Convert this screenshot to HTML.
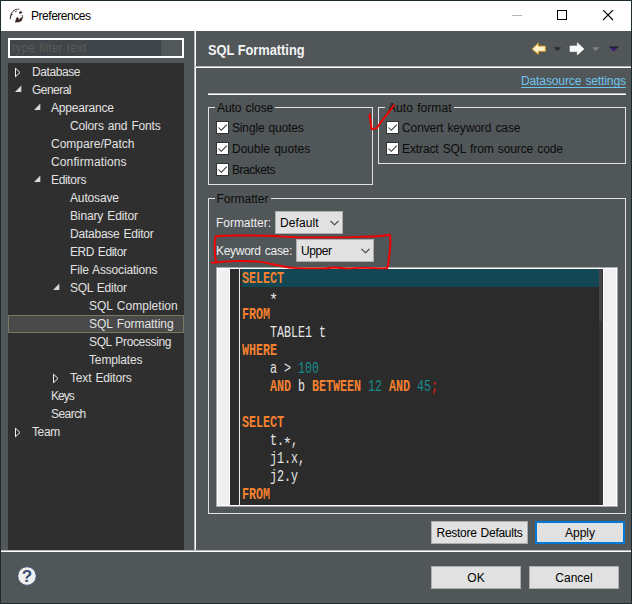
<!DOCTYPE html>
<html><head><meta charset="utf-8"><title>Preferences</title>
<style>
html,body{margin:0;padding:0;}
body{width:632px;height:604px;overflow:hidden;background:#515658;font-family:"Liberation Sans",sans-serif;font-size:12px;color:#eee;position:relative;word-spacing:0.9px;}
div,svg,span{position:absolute;box-sizing:border-box;}
.win{left:0;top:0;width:632px;height:604px;border:1px solid #1d2b30;}
.tb{left:1px;top:1px;width:630px;height:30px;background:#fff;}
.title{left:31px;top:9px;line-height:15px;color:#000;white-space:nowrap;}
.filter{left:8px;top:38px;width:176px;height:20px;border:2px solid #fff;background:#3f4548;}
.filter span{left:2px;top:1px;line-height:15px;color:#5b5957;white-space:nowrap;}
.fclr{right:0;top:0;width:21px;height:16px;background:#52575a;}
.tree{left:8px;top:63px;width:176px;height:487px;background:#2f2f2f;}
.ti{height:18px;line-height:18px;white-space:nowrap;color:#e2e2e2;}
.selrow{left:8px;width:176px;height:18px;background:#494949;border:1px solid #7b7962;}
.vl{left:194px;top:31px;width:2px;height:520px;background:#fff;border-left:1px solid #b4b6b7;}
.hl1{left:195px;top:66px;width:436px;height:2px;background:#fff;border-top:1px solid #b4b6b7;}
.hl2{left:208px;top:93px;width:418px;height:2px;background:#fff;border-top:1px solid #b4b6b7;}
.hl3{left:1px;top:550px;width:630px;height:2px;background:#fff;border-top:1px solid #b4b6b7;}
.rs{left:627px;top:68px;width:4px;height:482px;background:#4c5153;}
.h1{left:208px;top:42px;font-weight:bold;font-size:14px;line-height:16px;transform-origin:0 0;transform:scaleX(0.915);word-spacing:0;color:#f4f4f4;white-space:nowrap;}
.link{left:521px;top:74px;line-height:15px;color:#6fc5ee;text-decoration:underline;text-underline-offset:2px;white-space:nowrap;}
.fs{border:1px solid #e2e2e2;}
.lg{background:#515658;color:#0c0c0c;line-height:14px;white-space:nowrap;padding:0 1px;}
.cb{width:13px;height:13px;background:#fff;border:1px solid #333;}
.cbl{color:#0c0c0c;line-height:15px;white-space:nowrap;}
.lbl{color:#eee;line-height:15px;white-space:nowrap;}
.combo{background:#e1e1e1;border:1px solid #adadad;color:#000;}
.combo span{left:4px;top:3px;line-height:15px;}
.btn{background:#e1e1e1;border:1px solid #adadad;color:#000;text-align:center;line-height:23px;height:23px;white-space:nowrap;}
.ed{left:216px;top:267px;width:402px;height:240px;background:#fff;border:1px solid #a4a8ab;overflow:hidden;}
.eds{top:1px;height:236px;background:#f0f0f0;}
.edin{left:13px;top:1px;width:373px;height:236px;background:#2b2b2b;overflow:hidden;}
.gl{left:9px;top:0;width:1px;height:236px;background:#ededed;}
.cur{left:12px;top:0;width:357px;height:18px;background:#134753;}
.sb{left:369px;top:0;width:4px;height:236px;background:#353535;}
.sbt{left:369px;top:0;width:3px;height:52px;background:#444;}
.code{word-spacing:0;left:12px;top:1px;transform-origin:0 0;transform:scaleX(0.6863);font-family:"Liberation Mono",monospace;font-size:17px;color:#e6e6e6;white-space:pre;}
.cl{position:static;height:18px;line-height:18px;}
.cl b{color:#f5812f;font-weight:bold;}
.cl i{color:#168a8c;font-style:normal;}
.cl s{position:relative;display:inline-block;line-height:1;top:3.6px;transform:scaleX(1.3);text-decoration:none;}
.cl u{color:#e81c1c;text-decoration:none;}
</style></head><body>
<div class="tb"></div>
<svg style="left:0;top:0" width="32" height="32" viewBox="0 0 32 32"><g fill="none" stroke="#3a2927" stroke-linecap="round"><path d="M10.2 18.6 C10.5 16.8 10.9 15.2 11.4 13.6" stroke-width="1.1"/><path d="M11.6 13 C12.3 11.7 13.4 10.6 14.8 9.9" stroke-width="1"/><path d="M15.4 9.6 C16.6 9.2 17.8 9.1 19 9.2" stroke-width="0.8"/><path d="M11.6 15.2 L12.1 14.2 M15.4 11.7 L16.5 11.1" stroke-width="0.9"/><path d="M22.1 15.4 C22.5 16.2 22.7 17 22.7 17.8" stroke-width="1"/></g><g fill="#3a2927"><ellipse cx="20.5" cy="12.5" rx="1.7" ry="1.15" transform="rotate(-18 20.5 12.5)"/><path d="M15 22.4 L15.9 19 L17 16.9 L18.2 17.6 L19.1 19.7 L20.1 18.3 L22.2 17 L22.4 19.4 L21.2 21.3 L18.4 22.3 Z"/></g></svg>
<div class="title" style="letter-spacing:-0.47px">Preferences</div>
<svg style="left:512px;top:10px" width="12" height="12" viewBox="0 0 12 12"><path d="M0 5.5 H10" stroke="#b5b5b5" stroke-width="1"/></svg>
<svg style="left:557px;top:10px" width="11" height="11" viewBox="0 0 11 11"><rect x="0.5" y="0.5" width="9" height="9" fill="none" stroke="#000" stroke-width="1"/></svg>
<svg style="left:603px;top:10px" width="11" height="11" viewBox="0 0 11 11"><path d="M0 0 L10 10 M10 0 L0 10" stroke="#000" stroke-width="1.1"/></svg>

<div class="filter"><span style="letter-spacing:0.082px">type filter text</span><div class="fclr"></div></div>
<div class="tree"></div>
<svg class="ar" style="left:14px;top:67px" width="8" height="11" viewBox="0 0 8 11"><path d="M1.5 1.2 L1.5 9.8 L6 5.5 Z" fill="none" stroke="#f2f2f2" stroke-width="1"/></svg><div class="ti" style="left:32px;top:63px;letter-spacing:-0.411px">Database</div><svg class="ar" style="left:15px;top:85px" width="7" height="7" viewBox="0 0 7 7"><path d="M0 7 L6.3 7 L6.3 0.6 Z" fill="#d8d8d8"/></svg><div class="ti" style="left:32px;top:81px;letter-spacing:-0.534px">General</div><svg class="ar" style="left:34px;top:103px" width="7" height="7" viewBox="0 0 7 7"><path d="M0 7 L6.3 7 L6.3 0.6 Z" fill="#d8d8d8"/></svg><div class="ti" style="left:51px;top:99px;letter-spacing:-0.191px">Appearance</div><div class="ti" style="left:70px;top:117px;letter-spacing:-0.159px">Colors and Fonts</div><div class="ti" style="left:51px;top:135px;letter-spacing:0.01px">Compare/Patch</div><div class="ti" style="left:51px;top:153px;letter-spacing:0.131px">Confirmations</div><svg class="ar" style="left:34px;top:175px" width="7" height="7" viewBox="0 0 7 7"><path d="M0 7 L6.3 7 L6.3 0.6 Z" fill="#d8d8d8"/></svg><div class="ti" style="left:51px;top:171px;letter-spacing:-0.327px">Editors</div><div class="ti" style="left:70px;top:189px;letter-spacing:-0.15px">Autosave</div><div class="ti" style="left:70px;top:207px;letter-spacing:-0.134px">Binary Editor</div><div class="ti" style="left:70px;top:225px;letter-spacing:-0.225px">Database Editor</div><div class="ti" style="left:70px;top:243px;letter-spacing:-0.436px">ERD Editor</div><div class="ti" style="left:70px;top:261px;letter-spacing:-0.168px">File Associations</div><svg class="ar" style="left:53px;top:283px" width="7" height="7" viewBox="0 0 7 7"><path d="M0 7 L6.3 7 L6.3 0.6 Z" fill="#d8d8d8"/></svg><div class="ti" style="left:70px;top:279px;letter-spacing:-0.24px">SQL Editor</div><div class="ti" style="left:89px;top:297px;letter-spacing:0.015px">SQL Completion</div><div class="selrow" style="top:315px"></div><div class="ti" style="left:89px;top:315px;letter-spacing:-0.043px">SQL Formatting</div><div class="ti" style="left:89px;top:333px;letter-spacing:-0.359px">SQL Processing</div><div class="ti" style="left:89px;top:351px;letter-spacing:-0.138px">Templates</div><svg class="ar" style="left:52px;top:373px" width="8" height="11" viewBox="0 0 8 11"><path d="M1.5 1.2 L1.5 9.8 L6 5.5 Z" fill="none" stroke="#f2f2f2" stroke-width="1"/></svg><div class="ti" style="left:70px;top:369px;letter-spacing:-0.163px">Text Editors</div><div class="ti" style="left:51px;top:387px;letter-spacing:-0.962px">Keys</div><div class="ti" style="left:51px;top:405px;letter-spacing:-0.546px">Search</div><svg class="ar" style="left:14px;top:427px" width="8" height="11" viewBox="0 0 8 11"><path d="M1.5 1.2 L1.5 9.8 L6 5.5 Z" fill="none" stroke="#f2f2f2" stroke-width="1"/></svg><div class="ti" style="left:32px;top:423px;letter-spacing:-0.381px">Team</div>
<div class="vl"></div><div class="hl1"></div><div class="hl2"></div><div class="hl3"></div>
<div class="h1">SQL Formatting</div>
<!-- nav arrows -->
<svg style="left:524px;top:34px" width="104" height="30" viewBox="0 0 104 30">
<path d="M8.2 15 L14.3 9.1 L14.3 12.1 L21.4 12.1 L21.4 17.3 L14.3 17.3 L14.3 20.5 Z" fill="#fff4cf" stroke="#d99a1e" stroke-width="1" stroke-linejoin="round"/>
<path d="M29.6 13.2 L37.2 13.2 L33.4 17 Z" fill="#2a2a2a"/>
<path d="M60 15 L53.3 8.7 L53.3 12 L46 12 L46 17.6 L53.3 17.6 L53.3 20.9 Z" fill="#fbfbfb" stroke="#fbfbfb" stroke-width="0.6" stroke-linejoin="round"/>
<path d="M68 13.2 L75.4 13.2 L71.7 17 Z" fill="#808385"/>
<path d="M85 12.8 L94.6 12.8 L89.8 17.8 Z" fill="#3a1c70"/>
<path d="M85 12.8 L94.6 12.8 L93.6 13.8 L86 13.8 Z" fill="#1a1a2a"/>
</svg>
<div class="link" style="letter-spacing:-0.109px">Datasource settings</div>

<div class="fs" style="left:208px;top:107px;width:165px;height:78px"></div>
<div class="lg" style="left:215px;top:101px;padding:0 2px;letter-spacing:-0.071px">Auto close</div>
<div class="fs" style="left:378px;top:107px;width:248px;height:57px"></div>
<div class="lg" style="left:385px;top:101px;padding:0 2px 0 3px;letter-spacing:0.056px">Auto format</div>
<div class="fs" style="left:208px;top:198px;width:418px;height:316px"></div>
<div class="lg" style="left:215px;top:192px;padding:0 2px 0 1.5px">Formatter</div>
<div class="cb" style="left:216px;top:121px"><svg style="left:0;top:0" width="11" height="11" viewBox="0 0 11 11"><path d="M1.5 5.5 L4.3 8.3 L9.8 2.6" fill="none" stroke="#333" stroke-width="1.05"/></svg></div><div class="cbl" style="left:232px;top:121px;letter-spacing:-0.152px">Single quotes</div><div class="cb" style="left:216px;top:142px"><svg style="left:0;top:0" width="11" height="11" viewBox="0 0 11 11"><path d="M1.5 5.5 L4.3 8.3 L9.8 2.6" fill="none" stroke="#333" stroke-width="1.05"/></svg></div><div class="cbl" style="left:232px;top:142px;letter-spacing:-0.008px">Double quotes</div><div class="cb" style="left:216px;top:163px"><svg style="left:0;top:0" width="11" height="11" viewBox="0 0 11 11"><path d="M1.5 5.5 L4.3 8.3 L9.8 2.6" fill="none" stroke="#333" stroke-width="1.05"/></svg></div><div class="cbl" style="left:232px;top:163px;letter-spacing:-0.47px">Brackets</div><div class="cb" style="left:386px;top:121px"><svg style="left:0;top:0" width="11" height="11" viewBox="0 0 11 11"><path d="M1.5 5.5 L4.3 8.3 L9.8 2.6" fill="none" stroke="#333" stroke-width="1.05"/></svg></div><div class="cbl" style="left:402px;top:121px;letter-spacing:-0.107px">Convert keyword case</div><div class="cb" style="left:386px;top:142px"><svg style="left:0;top:0" width="11" height="11" viewBox="0 0 11 11"><path d="M1.5 5.5 L4.3 8.3 L9.8 2.6" fill="none" stroke="#333" stroke-width="1.05"/></svg></div><div class="cbl" style="left:402px;top:142px;letter-spacing:-0.107px">Extract SQL from source code</div>
<div class="lbl" style="left:216px;top:216px;letter-spacing:-0.038px">Formatter:</div>
<div class="combo" style="left:275px;top:211px;width:68px;height:23px"><span style="top:4px;letter-spacing:0.095px">Default</span><svg style="left:54px;top:8px" width="9" height="6" viewBox="0 0 9 6"><path d="M0.5 0.8 L4.5 4.8 L8.5 0.8" fill="none" stroke="#3c3c3c" stroke-width="1.15"/></svg></div>
<div class="lbl" style="left:216px;top:244px;letter-spacing:-0.3px;word-spacing:1.2px">Keyword case:</div>
<div class="combo" style="left:296px;top:239px;width:78px;height:23px"><span style="top:4px;letter-spacing:-0.422px">Upper</span><svg style="left:64px;top:8px" width="9" height="6" viewBox="0 0 9 6"><path d="M0.5 0.8 L4.5 4.8 L8.5 0.8" fill="none" stroke="#3c3c3c" stroke-width="1.15"/></svg></div>
<div class="ed"><div class="eds" style="left:1px;width:11px"></div><div class="eds" style="left:387px;width:12px"></div><div class="edin"><div class="gl"></div><div class="cur"></div><div class="sb"></div><div class="sbt"></div><div class="code"><div class="cl"><b>SELECT</b></div><div class="cl">    <s>*</s></div><div class="cl"><b>FROM</b></div><div class="cl">    TABLE1 t</div><div class="cl"><b>WHERE</b></div><div class="cl">    a &gt; <i>100</i></div><div class="cl">    <b>AND</b> b <b>BETWEEN</b> <i>12</i> <b>AND</b> <i>45</i><u>;</u></div><div class="cl"></div><div class="cl"><b>SELECT</b></div><div class="cl">    t.<s>*</s>,</div><div class="cl">    j1.x,</div><div class="cl">    j2.y</div><div class="cl"><b>FROM</b></div><div class="cl">    TABLE1 t</div></div></div></div>
<!-- red annotations -->
<svg style="left:0;top:0" width="632" height="604" viewBox="0 0 632 604"><g fill="none" stroke="#f40000" stroke-width="1.9" stroke-linecap="round" stroke-linejoin="round">
<path d="M369.5 114.5 L370.3 119.8 L371.2 126.5 L372 129.4 L376.6 128.1 L381.5 121.5 L387.3 114 L394 105.3"/>
<path d="M211.9 262.7 C220 261.8 228 261.2 235.6 261.1 C244 261 252 261.2 259.4 261.6 C265 262.4 270 263.6 275.2 264.8 C281 266.2 287 267.4 292.6 267.9 C300 268.4 312 268.4 323.7 268.4 C328 268.2 331 267.5 334.8 267.5 C339 267.6 343 268.4 347.5 268.4 C353 268.3 358 267.9 363.3 267.9 C371 268 379 268.4 387 268.4 C387.6 267 388 265.5 388.3 264 C388.8 260 389.2 257 389.4 254.5 C390 250 390.4 246 390.5 241.8 C390.4 239.5 390.1 237 389.9 234.7 C387.5 235.2 385 235.5 382.3 235.8 C376 236.4 370 236.7 363.3 236.8 C352 237.1 342 237.4 331.6 237.4 C321 237.4 310 237.4 300 237.4 C289 237 278 236.2 267.3 235.8 C257 235.5 246 235.4 235.6 235.5 C229 235.6 222 235.9 215.9 236.3 C215.2 238 214.9 240 214.8 241.8 C214.7 245 214.7 248 214.8 251.3 C214.9 255 215.4 258.5 215.9 261.6"/>
</g></svg>
<div class="btn" style="left:431px;top:521px;width:97px;letter-spacing:-0.272px">Restore Defaults</div>
<div class="btn" style="left:535px;top:521px;width:90px;border:2px solid #0078d7;line-height:21px">Apply</div>
<div class="btn" style="left:431px;top:566px;width:90px">OK</div>
<div class="btn" style="left:529px;top:566px;width:90px">Cancel</div>
<svg style="left:17px;top:566px" width="20" height="20" viewBox="0 0 20 20"><circle cx="10" cy="10" r="9.2" fill="#f0f0f0" stroke="#3f5377" stroke-width="0.8"/><text x="10" y="16.2" text-anchor="middle" font-family="Liberation Sans, sans-serif" font-weight="bold" font-size="17" fill="#3b4d72">?</text></svg>
<div class="win"></div>
</body></html>
